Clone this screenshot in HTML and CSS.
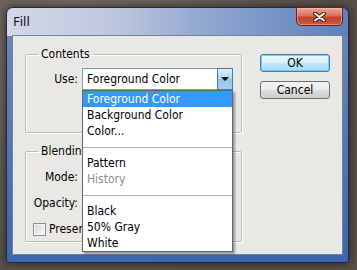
FILE: index.html
```html
<!DOCTYPE html>
<html lang="en">

<head>
    <meta charset="UTF-8">
    <title>Fill</title>
    <link rel="stylesheet" href="styles.css">
</head>

<body>
    <div class="window">
        <!-- title bar -->
        <div class="titlebar">
            <span class="title">Fill</span>
            <button type="button" class="close">
                <svg width="13" height="10" viewBox="0 0 13 10">
                    <path d="M2 1.5 L11 8.5 M11 1.5 L2 8.5" stroke="#3b1a14" stroke-width="4" stroke-linecap="round" />
                    <path d="M2 1.5 L11 8.5 M11 1.5 L2 8.5" stroke="#fff" stroke-width="2" stroke-linecap="round" />
                </svg>
            </button>
        </div>

        <div class="client">
            <div class="groups">
                <fieldset class="group contents">
                    <legend>Contents</legend>
                    <div class="row">
                        <label class="label">Use:</label>
                        <div class="select focus">
                            <span class="value">Foreground Color</span>
                            <span class="arrow"><i class="tri"></i></span>
                            <!-- open list -->
                            <ul class="menu">
                                <li class="opt selected">Foreground Color</li>
                                <li class="opt">Background Color</li>
                                <li class="opt">Color...</li>
                                <li class="sep"></li>
                                <li class="opt">Pattern</li>
                                <li class="opt disabled">History</li>
                                <li class="sep"></li>
                                <li class="opt">Black</li>
                                <li class="opt">50% Gray</li>
                                <li class="opt">White</li>
                            </ul>
                        </div>
                    </div>
                </fieldset>

                <fieldset class="group blending">
                    <legend>Blending</legend>
                    <!-- these controls sit under the open list -->
                    <div class="row first">
                        <label class="label">Mode:</label>
                        <div class="select mode">
                            <span class="value"></span>
                            <span class="arrow"><i class="tri"></i></span>
                        </div>
                    </div>
                    <div class="row">
                        <label class="label">Opacity:</label>
                        <span class="field"></span>
                    </div>
                    <div class="row check">
                        <span class="checkbox"></span>
                        <span class="check-text">Preserve Transparency</span>
                    </div>
                </fieldset>
            </div>

            <div class="buttons">
                <button type="button" class="btn default">OK</button>
                <button type="button" class="btn">Cancel</button>
            </div>
        </div>
    </div>
</body>

</html>
```

FILE: styles.css
```css
* {
    margin: 0;
    padding: 0;
    box-sizing: border-box;
}

html,
body {
    width: 357px;
    height: 270px;
    overflow: hidden;
}

body {
    background: radial-gradient(circle at 20% 10%, #736a63, #574f49 70%);
    padding: 7px 0 0 6px;
    font-family: "DejaVu Sans Condensed", "Liberation Sans", Arial, sans-serif;
    font-size: 12px;
    color: #000;
}

/* window frame */
.window {
    width: 343px;
    height: 256px;
    border: 1px solid #1f2c48;
    border-radius: 7px 7px 3px 3px;
    padding: 0 5px 7px;
    background:
        linear-gradient(to right, #d4d7e8 0%, #c0c8df 30%, #8ea5cf 60%, #5f80bc 100%) top / 100% 28px no-repeat,
        linear-gradient(to bottom, #7188b4, #3d66ae);
    box-shadow: 0 0 8px rgba(0, 0, 0, 0.6);
}

.titlebar {
    height: 27px;
    display: flex;
    justify-content: space-between;
    align-items: flex-start;
}

.title {
    font-family: "Noto Sans", "Open Sans", sans-serif;
    font-size: 13px;
    line-height: 16px;
    margin-top: 5px;
    padding-left: 1px;
    color: #141414;
}

.close {
    width: 47px;
    height: 19px;
    margin-top: -1px;
    border: 1px solid #5e261d;
    border-radius: 0 0 5px 5px;
    background: linear-gradient(#eba795, #d7735d 45%, #c2432c 55%, #cc5a42);
    display: flex;
    align-items: center;
    justify-content: center;
    box-shadow: inset 0 0 0 1px rgba(255, 200, 190, 0.45);
}

/* client area */
.client {
    height: 220px;
    background: #eae8e5;
    border: 1px solid #6f83a6;
    display: flex;
    gap: 18px;
    padding: 10px 0 0 12px;
}

.groups {
    width: 217px;
    display: flex;
    flex-direction: column;
    gap: 10px;
}

.group {
    border: 1px solid #bdbbb7;
    border-radius: 2px;
    box-shadow: inset 1px 1px 0 #fff, 1px 1px 0 #fff;
    padding: 0 7px;
    min-width: 0;
}

.group legend {
    margin-left: 5px;
    padding: 0 3px;
    line-height: 16px;
}

.contents {
    height: 87px;
}

.blending {
    height: 99px;
}

.row {
    display: flex;
    align-items: center;
    gap: 4px;
    height: 22px;
    margin-top: 4px;
}

.contents .row {
    margin-top: 6px;
}

.row.first {
    margin-top: 7px;
}

.label {
    width: 45px;
    text-align: right;
}

/* combo box */
.select {
    position: relative;
    width: 151px;
    height: 22px;
    border: 1px solid #a3a9b2;
    background: #fff;
    display: flex;
    align-items: center;
}

.select.focus {
    border-color: #7d9cbd;
}

.select .value {
    flex: 1;
    padding-left: 4px;
    white-space: nowrap;
    overflow: hidden;
}

.arrow {
    width: 16px;
    align-self: stretch;
    margin: -1px -1px -1px 0;
    border: 1px solid #8f9aa8;
    background: linear-gradient(#f2f2f2, #e2e2e2 50%, #d3d3d3 51%, #dcdcdc);
    display: flex;
    align-items: center;
    justify-content: center;
}

.focus .arrow {
    border-color: #3c7fb1;
    background: linear-gradient(#dcedf9, #b3d7f1 50%, #92c4ea 51%, #a6d0ef);
}

.tri {
    width: 0;
    height: 0;
    border-left: 4px solid transparent;
    border-right: 4px solid transparent;
    border-top: 4px solid #000;
}

.select.mode {
    width: 110px;
}

.menu {
    position: absolute;
    top: calc(100% + 1px);
    left: -1px;
    width: 151px;
    list-style: none;
    background: #fff;
    border: 1px solid #676767;
    box-shadow: 2px 2px 2px rgba(0, 0, 0, 0.35);
    z-index: 10;
}

.opt {
    height: 16px;
    line-height: 16px;
    padding-left: 4px;
    white-space: nowrap;
}

.opt.selected {
    background: #3399ff;
    color: #fff;
}

.opt.disabled {
    color: #8d8d8d;
}

.sep {
    height: 16px;
    background: linear-gradient(#b2b2b2, #b2b2b2) 0 8px / 100% 1px no-repeat;
}

.field {
    width: 40px;
    height: 20px;
    border: 1px solid #a3a9b2;
    background: #fff;
}

.check {
    gap: 3px;
}

.checkbox {
    width: 13px;
    height: 13px;
    border: 1px solid #8e8f8f;
    background: linear-gradient(135deg, #d6d6d6, #fafafa);
    box-shadow: inset 0 0 0 1px #f4f4f4;
}

/* label is cut where the open list covers it */
.check-text {
    width: 33px;
    overflow: hidden;
    white-space: nowrap;
}

/* buttons */
.buttons {
    display: flex;
    flex-direction: column;
    gap: 9px;
    padding-top: 8px;
}

.btn {
    width: 70px;
    height: 18px;
    border: 1px solid #707070;
    border-radius: 3px;
    background: linear-gradient(#f3f3f3, #ebebeb 50%, #dddddd 51%, #cfcfcf);
    font: inherit;
    line-height: 16px;
    color: #000;
}

.btn.default {
    border-color: #3c7fb1;
    background: linear-gradient(#ebf7fd, #dbf1fc 50%, #bfe7fd 51%, #a9daf5);
    box-shadow: inset 0 0 0 1px #6fd3f7;
}
```
